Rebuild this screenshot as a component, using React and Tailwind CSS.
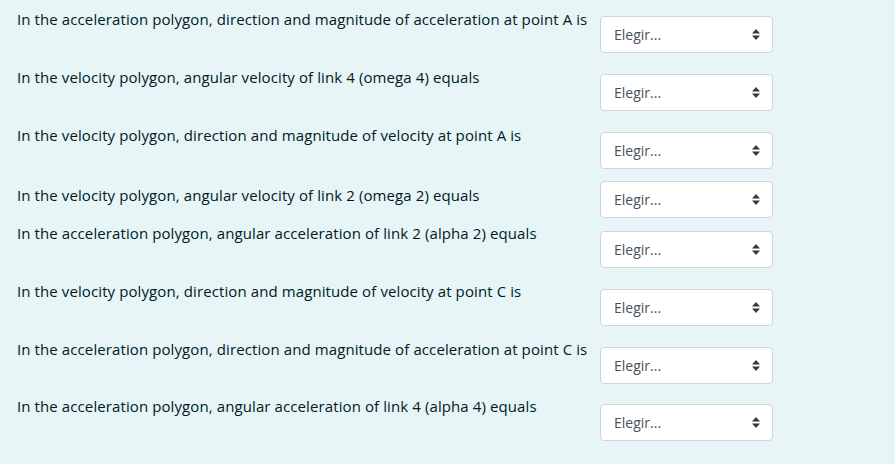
import React from "react";

const rows = [
  { text: "In the acceleration polygon, direction and magnitude of acceleration at point A is", row: "mt-[8px] h-[58px]", sel: "mt-[8px]", txt: "mt-0" },
  { text: "In the velocity polygon, angular velocity of link 4 (omega 4) equals", row: "h-[58px]", sel: "mt-[8px]", txt: "mt-0" },
  { text: "In the velocity polygon, direction and magnitude of velocity at point A is", row: "h-[57px]", sel: "mt-[8px]", txt: "mt-0" },
  { text: "In the velocity polygon, angular velocity of link 2 (omega 2) equals", row: "h-[41px]", sel: "mt-0", txt: "mt-[3px]" },
  { text: "In the acceleration polygon, angular acceleration of link 2 (alpha 2) equals", row: "h-[58px]", sel: "mt-[9px]", txt: "mt-0" },
  { text: "In the velocity polygon, direction and magnitude of velocity at point C is", row: "h-[58px]", sel: "mt-[9px]", txt: "mt-0" },
  { text: "In the acceleration polygon, direction and magnitude of acceleration at point C is", row: "h-[57px]", sel: "mt-[9px]", txt: "mt-0" },
  { text: "In the acceleration polygon, angular acceleration of link 4 (alpha 4) equals", row: "h-[58px]", sel: "mt-[9px]", txt: "mt-0" },
];

function Arrows() {
  return (
    <svg width="8" height="11" viewBox="0 0 8 11" className="shrink-0">
      <path d="M4 0 L8 4.5 L0 4.5 Z" fill="#343a40" />
      <path d="M0 6.5 L8 6.5 L4 11 Z" fill="#343a40" />
    </svg>
  );
}

export default function App() {
  return (
    <div
      className="w-[895px] h-[464px] bg-[#e7f5f7] overflow-hidden pl-[17px] flex flex-col"
      style={{ fontFamily: '"Open Sans", "Noto Sans", sans-serif' }}
    >
      {rows.map((r, i) => (
        <div key={i} className={`flex items-start shrink-0 ${r.row}`}>
          <div className={`w-[583px] text-[15px] leading-[22px] tracking-[0.1px] text-[#001a1e] whitespace-nowrap ${r.txt}`}>
            {r.text}
          </div>
          <div
            className={`w-[173px] h-[37px] bg-white border border-[#ced4da] rounded-[4px] flex items-center justify-between pl-[13px] pr-[12px] text-[14px] text-[#495057] ${r.sel}`}
          >
            <span>Elegir...</span>
            <Arrows />
          </div>
        </div>
      ))}
    </div>
  );
}
